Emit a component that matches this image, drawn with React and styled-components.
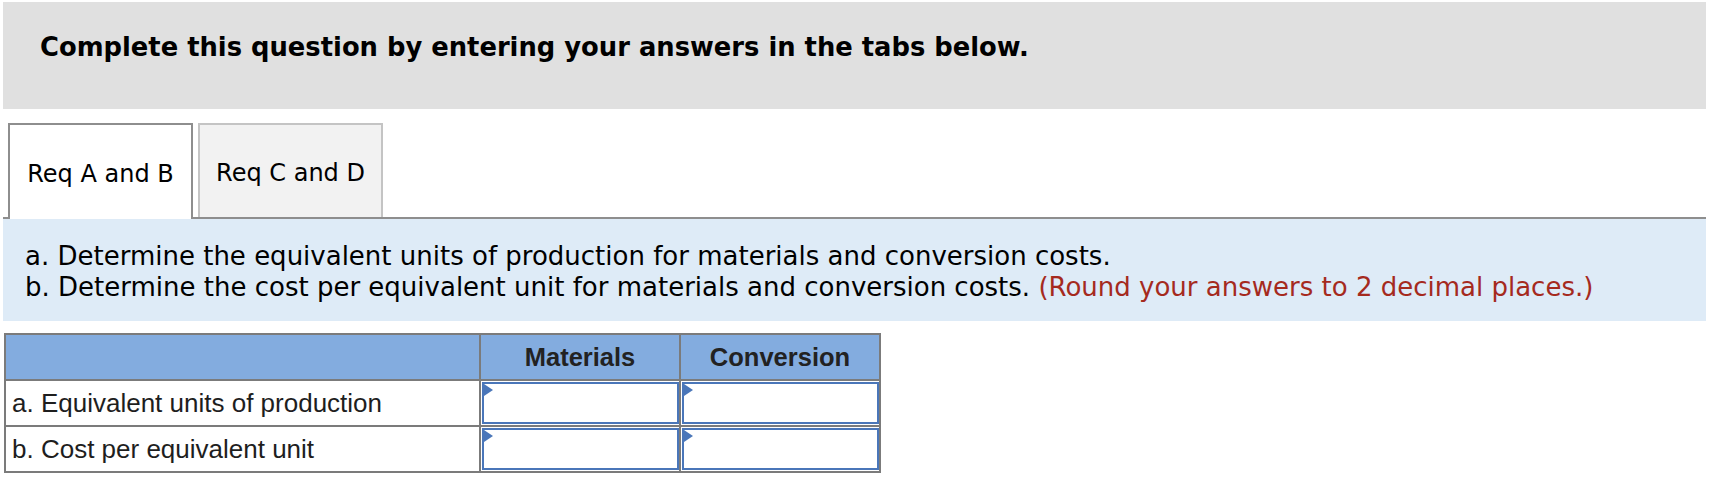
import React from 'react';
import styled, { createGlobalStyle } from 'styled-components';

const GlobalStyle = createGlobalStyle`
  body {
    margin: 0;
    background: #ffffff;
    font-family: 'DejaVu Sans', Verdana, sans-serif;
  }
`;

const rows = [
  { id: 'a', label: 'a. Equivalent units of production' },
  { id: 'b', label: 'b. Cost per equivalent unit' },
];

const App = () => {
  return (
    <>
      <GlobalStyle />
      <Page>
        <Banner>Complete this question by entering your answers in the tabs below.</Banner>
        <TabBar>
          <Tab active>Req A and B</Tab>
          <Tab>Req C and D</Tab>
        </TabBar>
        <Instructions>
          <Line>a. Determine the equivalent units of production for materials and conversion costs.</Line>
          <Line>
            b. Determine the cost per equivalent unit for materials and conversion costs.{' '}
            <Hint>(Round your answers to 2 decimal places.)</Hint>
          </Line>
        </Instructions>
        <Table>
          <thead>
            <tr>
              <HeadCell $wide />
              <HeadCell>Materials</HeadCell>
              <HeadCell>Conversion</HeadCell>
            </tr>
          </thead>
          <tbody>
            {rows.map((row) => (
              <tr key={row.id}>
                <LabelCell>{row.label}</LabelCell>
                <InputCell>
                  <AnswerBox>
                    <Marker />
                  </AnswerBox>
                </InputCell>
                <InputCell>
                  <AnswerBox>
                    <Marker />
                  </AnswerBox>
                </InputCell>
              </tr>
            ))}
          </tbody>
        </Table>
      </Page>
    </>
  );
};
export default App;

const Page = styled.div`
  width: 1703px;
  margin: 2px 0 0 3px;
`;

const Banner = styled.div`
  height: 107px;
  box-sizing: border-box;
  padding: 30px 0 0 37px;
  background: #e0e0e0;
  font-size: 25.8px;
  line-height: 31px;
  font-weight: 700;
  color: #000;
`;

const TabBar = styled.div`
  display: flex;
  align-items: flex-end;
  gap: 5px;
  padding: 14px 0 0 5px;
  border-bottom: 2px solid #8e8e8e;
`;

const Tab = styled.div`
  display: flex;
  align-items: center;
  justify-content: center;
  box-sizing: border-box;
  width: 185px;
  height: ${({ active }) => (active ? '96px' : '94px')};
  margin-bottom: ${({ active }) => (active ? '-2px' : '0')};
  padding: ${({ active }) => (active ? '4px 0 0' : '4px 0 0')};
  border: 2px solid ${({ active }) => (active ? '#8e8e8e' : '#c4c4c4')};
  border-bottom: none;
  background: ${({ active }) => (active ? '#ffffff' : '#f2f2f2')};
  font-size: 24px;
  white-space: nowrap;
  color: #000;
`;

const Instructions = styled.div`
  background: #deebf7;
  padding: 22px 0 18px 22px;
  font-size: 26px;
  line-height: 31px;
  color: #000;
`;

const Line = styled.div``;

const Hint = styled.span`
  color: #a52a1e;
`;

const Table = styled.table`
  margin: 12px 0 0 1px;
  border-collapse: collapse;
  font-family: 'Liberation Sans', Arial, sans-serif;
  font-size: 26px;
  color: #1e1e1e;

  td,
  th {
    border: 2px solid #7b7b7b;
  }
`;

const HeadCell = styled.th`
  width: ${({ $wide }) => ($wide ? '473px' : '198px')};
  height: 44px;
  padding: 0;
  background: #83acdf;
  font-weight: 700;
  font-size: 25.5px;
  text-align: center;
  color: #222;
`;

const LabelCell = styled.td`
  height: 44px;
  padding: 0 0 0 6px;
  vertical-align: middle;
  white-space: nowrap;
`;

const InputCell = styled.td`
  height: 44px;
  padding: 1px 0 1px 1px;
  box-sizing: border-box;
`;

const AnswerBox = styled.div`
  position: relative;
  box-sizing: border-box;
  height: 42px;
  border: 2px solid #4a76b9;
  background: #fff;
`;

const Marker = styled.span`
  position: absolute;
  top: 0;
  left: 0;
  width: 0;
  height: 0;
  border-top: 6px solid transparent;
  border-bottom: 6px solid transparent;
  border-left: 9px solid #4a76b9;
`;
